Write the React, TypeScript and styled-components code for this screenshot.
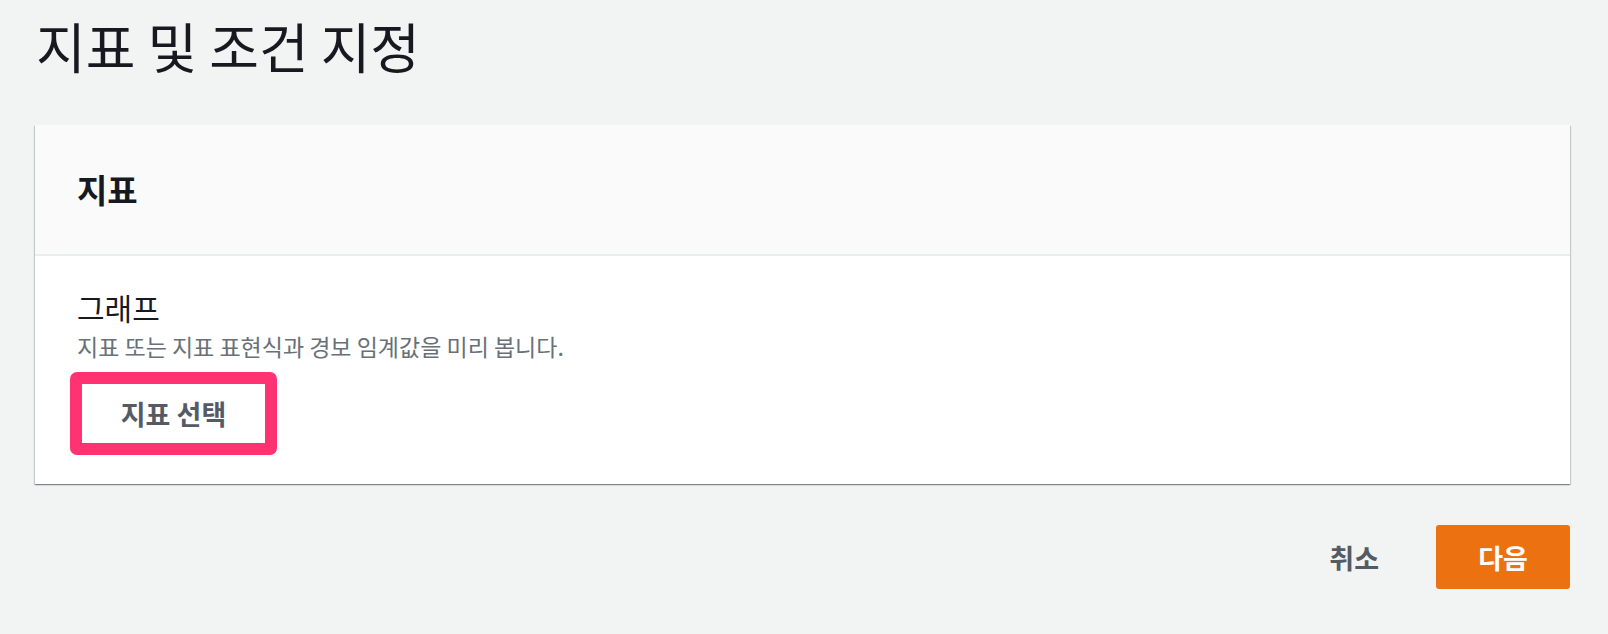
import React from "react";
import styled, { createGlobalStyle } from "styled-components";

const GlobalStyle = createGlobalStyle`
  html, body {
    margin: 0;
    padding: 0;
    background: #f2f3f3;
  }
  body {
    font-family: "Noto Sans CJK KR", "Noto Sans", sans-serif;
    color: #16191f;
  }
`;

const Page = styled.div`
  box-sizing: border-box;
  width: 1608px;
  min-height: 634px;
  padding: 0 38px 0 35px;
  display: flex;
  flex-direction: column;
`;

const Title = styled.h1`
  margin: 11px 0 0 1px;
  font-size: 54px;
  font-weight: 400;
  line-height: 70px;
  color: #16191f;
  letter-spacing: 0;
`;

const Card = styled.section`
  margin-top: 44px;
  background: #ffffff;
  box-shadow: 0 1px 1px 0 rgba(0, 28, 36, 0.3), 1px 1px 1px 0 rgba(0, 28, 36, 0.15),
    -1px 1px 1px 0 rgba(0, 28, 36, 0.15);
  display: flex;
  flex-direction: column;
`;

const CardHeader = styled.header`
  box-sizing: border-box;
  height: 131px;
  background: #fafafa;
  border-bottom: 2px solid #eaeded;
  padding: 0 40px 0 42px;
  display: flex;
  align-items: center;
`;

const CardTitle = styled.h2`
  margin: 0;
  font-size: 33px;
  font-weight: 700;
  line-height: 1;
  color: #16191f;
`;

const CardBody = styled.div`
  padding: 31px 40px 29px 35px;
  display: flex;
  flex-direction: column;
  align-items: flex-start;
`;

const FieldLabel = styled.div`
  margin-left: 7px;
  font-size: 30px;
  line-height: 40px;
  font-weight: 400;
  color: #16191f;
`;

const FieldDescription = styled.div`
  margin: -1px 0 0 7px;
  font-size: 23px;
  line-height: 40px;
  color: #687078;
`;

const Highlight = styled.div`
  margin-top: 6px;
  border: 12px solid #ff3371;
  border-radius: 7px;
  display: inline-flex;
`;

const SecondaryButton = styled.button`
  box-sizing: border-box;
  width: 183px;
  height: 59px;
  border: none;
  background: #ffffff;
  font-family: inherit;
  font-size: 27px;
  font-weight: 700;
  color: #545b64;
  cursor: pointer;
  display: flex;
  align-items: center;
  justify-content: center;
`;

const Footer = styled.div`
  margin-top: 41px;
  display: flex;
  justify-content: flex-end;
  align-items: center;
  gap: 40px;
`;

const LinkButton = styled.button`
  border: none;
  background: transparent;
  padding: 0;
  font-family: inherit;
  font-size: 27px;
  font-weight: 700;
  color: #545b64;
  cursor: pointer;
  margin-right: 17px;
`;

const PrimaryButton = styled.button`
  box-sizing: border-box;
  width: 134px;
  height: 64px;
  border: none;
  border-radius: 3px;
  background: #ec7211;
  font-family: inherit;
  font-size: 27px;
  font-weight: 700;
  color: #ffffff;
  cursor: pointer;
`;

export default function App() {
  return (
    <>
      <GlobalStyle />
      <Page>
        <Title>지표 및 조건 지정</Title>
        <Card>
          <CardHeader>
            <CardTitle>지표</CardTitle>
          </CardHeader>
          <CardBody>
            <FieldLabel>그래프</FieldLabel>
            <FieldDescription>지표 또는 지표 표현식과 경보 임계값을 미리 봅니다.</FieldDescription>
            <Highlight>
              <SecondaryButton>지표 선택</SecondaryButton>
            </Highlight>
          </CardBody>
        </Card>
        <Footer>
          <LinkButton>취소</LinkButton>
          <PrimaryButton>다음</PrimaryButton>
        </Footer>
      </Page>
    </>
  );
}
